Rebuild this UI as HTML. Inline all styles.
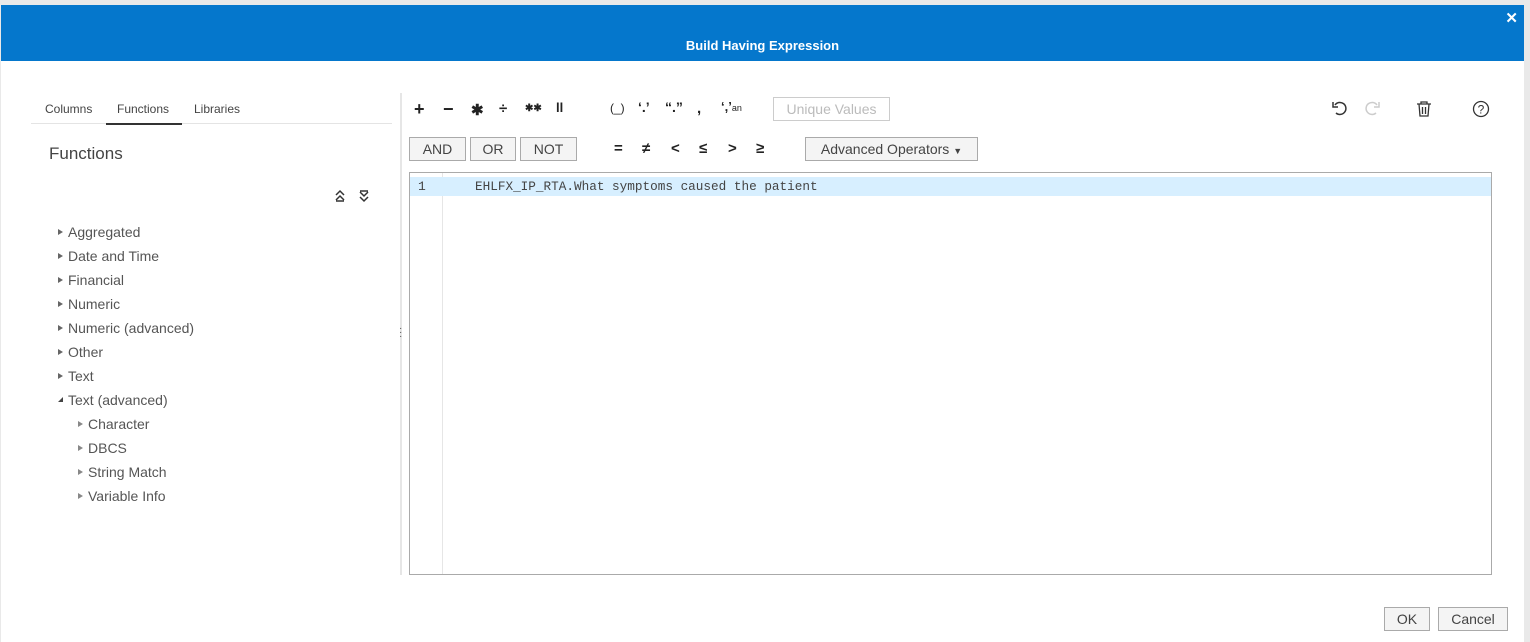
<!DOCTYPE html>
<html><head><meta charset="utf-8"><style>
*{box-sizing:border-box;margin:0;padding:0}
body{width:1530px;height:642px;overflow:hidden;background:#e9e9e9;font-family:"Liberation Sans",sans-serif;color:#333;position:relative}
.dlg{position:absolute;left:1px;top:5px;width:1523px;height:637px;background:#fff}
.hdr{height:56px;background:#0577cc;color:#fff;font-weight:bold;font-size:13px;text-align:center;padding-top:33px}
.x{position:absolute;right:6px;top:4px;color:#fff;font-size:15px;font-weight:bold}
.a{position:absolute;white-space:nowrap}
.tabs{left:31px;top:96px;width:361px;height:28px;border-bottom:1px solid #e4e4e4;font-size:12px;color:#444}
.tabs span{position:absolute;top:6px}
.tree div{position:absolute;font-size:14px;color:#555}
.tree div:before{content:"";position:absolute;left:-10px;top:5px;border-left:5px solid #666;border-top:3.5px solid transparent;border-bottom:3.5px solid transparent}
.tree div.open:before{border:none;border-right:5px solid #444;border-top:5px solid transparent;left:-10px;top:5px;width:0;height:0}
.tree div.sub:before{border-left-color:#888}
.btn{position:absolute;border:1px solid #aaa;background:#f4f4f4;font-size:14px;color:#444;text-align:center}
.op{position:absolute;font-size:15px;font-weight:bold;color:#222}
</style></head><body>
<div class="dlg">
<div class="hdr">Build Having Expression</div>
<div class="x">✕</div>
</div>
<div class="a tabs"><span style="left:14px">Columns</span><span style="left:86px">Functions</span><span style="left:163px">Libraries</span>
<div style="position:absolute;left:75px;top:27px;width:76px;height:2px;background:#333"></div></div>
<div class="a" style="left:49px;top:144px;font-size:17px;color:#444">Functions</div>
<svg class="a" style="left:333px;top:188px" width="40" height="16"><g fill="none" stroke="#333" stroke-width="1.5"><path d="M3 7l4-4 4 4M3 12l4-4 4 4M3 13h8"/><path d="M27 3h8M27 4l4 4 4-4M27 9l4 4 4-4"/></g></svg>
<div class="tree">
<div style="left:68px;top:224px">Aggregated</div>
<div style="left:68px;top:248px">Date and Time</div>
<div style="left:68px;top:272px">Financial</div>
<div style="left:68px;top:296px">Numeric</div>
<div style="left:68px;top:320px">Numeric (advanced)</div>
<div style="left:68px;top:344px">Other</div>
<div style="left:68px;top:368px">Text</div>
<div class="open" style="left:68px;top:392px">Text (advanced)</div>
<div class="sub" style="left:88px;top:416px">Character</div>
<div class="sub" style="left:88px;top:440px">DBCS</div>
<div class="sub" style="left:88px;top:464px">String Match</div>
<div class="sub" style="left:88px;top:488px">Variable Info</div>
</div>
<div class="a" style="left:400px;top:93px;width:2px;height:482px;background:#e6e6e6"></div>
<div class="a" style="left:399px;top:327px;font-size:10px;color:#555;line-height:4px">·<br>·<br>·</div>
<div class="op" style="left:414px;top:99px;font-size:18px">+</div>
<div class="op" style="left:443px;top:99px;font-size:18px">−</div>
<div class="op" style="left:471px;top:101px">✱</div>
<div class="op" style="left:499px;top:100px">÷</div>
<div class="op" style="left:525px;top:103px;font-size:10px">✱✱</div>
<div class="op" style="left:556px;top:100px;font-size:13px">ll</div>
<div class="op" style="left:610px;top:101px;font-size:12px;font-weight:normal">(_)</div>
<div class="op" style="left:638px;top:99px;font-size:14px">‘.’</div>
<div class="op" style="left:665px;top:99px;font-size:14px">“.”</div>
<div class="op" style="left:697px;top:100px">,</div>
<div class="op" style="left:721px;top:99px;font-size:13px">‘,’<span style="font-size:9px;font-weight:normal">an</span></div>
<div class="btn" style="left:773px;top:97px;width:117px;height:24px;background:#fff;border-color:#ccc;color:#bbb;padding-top:3px">Unique Values</div>
<svg class="a" style="left:1330px;top:99px" width="60" height="20"><g fill="none" stroke-width="1.5"><path d="M5 6a6 6 0 1 1 1 8" stroke="#333"/><path d="M3 3v5h5" stroke="#333"/><path d="M47 6a6 6 0 1 0 -1 8" stroke="#ccc"/><path d="M49 3v5h-5" stroke="#ccc"/></g></svg>
<svg class="a" style="left:1416px;top:100px" width="16" height="18"><g fill="none" stroke="#333" stroke-width="1.3"><path d="M1 4h14M5 4V2h6v2M3 4l1 12h8l1-12M6.5 7v7M9.5 7v7"/></g></svg>
<svg class="a" style="left:1472px;top:100px" width="18" height="18"><circle cx="9" cy="9" r="7.5" fill="none" stroke="#333" stroke-width="1.3"/><text x="9" y="13.5" text-anchor="middle" font-size="12" font-family="Liberation Sans" fill="#333">?</text></svg>
<div class="btn" style="left:409px;top:137px;width:57px;height:24px;padding-top:3px">AND</div>
<div class="btn" style="left:470px;top:137px;width:46px;height:24px;padding-top:3px">OR</div>
<div class="btn" style="left:520px;top:137px;width:57px;height:24px;padding-top:3px">NOT</div>
<div class="op" style="left:614px;top:140px">=</div>
<div class="op" style="left:642px;top:140px">≠</div>
<div class="op" style="left:671px;top:140px">&lt;</div>
<div class="op" style="left:699px;top:140px">≤</div>
<div class="op" style="left:728px;top:140px">&gt;</div>
<div class="op" style="left:756px;top:140px">≥</div>
<div class="btn" style="left:805px;top:137px;width:173px;height:24px;padding-top:3px">Advanced Operators <span style="font-size:9px">▼</span></div>
<div class="a" style="left:409px;top:172px;width:1083px;height:403px;border:1px solid #aaa"></div>
<div class="a" style="left:442px;top:173px;width:1px;height:401px;background:#e6e6e6"></div>
<div class="a" style="left:410px;top:177px;width:1081px;height:19px;background:#d7efff"></div>
<div class="a" style="left:418px;top:179px;font-family:'Liberation Mono',monospace;font-size:13px;color:#444">1</div>
<div class="a" style="left:475px;top:179px;font-family:'Liberation Mono',monospace;font-size:12.7px;color:#444">EHLFX_IP_RTA.What symptoms caused the patient</div>
<div class="btn" style="left:1384px;top:607px;width:46px;height:24px;padding-top:3px">OK</div>
<div class="btn" style="left:1438px;top:607px;width:70px;height:24px;padding-top:3px">Cancel</div>
</body></html>
